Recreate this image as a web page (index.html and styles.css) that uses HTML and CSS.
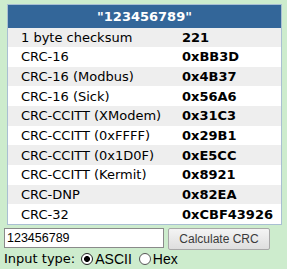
FILE: index.html
```html
<!DOCTYPE html>
<html>
<head>
<meta charset="utf-8">
<link rel="stylesheet" href="styles.css">
</head>
<body>
<div class="page">
  <div class="crc">
    <div class="head">"123456789"</div>
    <div class="row"><span class="lbl">1 byte checksum</span><span class="val">221</span></div>
    <div class="row"><span class="lbl">CRC-16</span><span class="val">0xBB3D</span></div>
    <div class="row"><span class="lbl">CRC-16 (Modbus)</span><span class="val">0x4B37</span></div>
    <div class="row"><span class="lbl">CRC-16 (Sick)</span><span class="val">0x56A6</span></div>
    <div class="row"><span class="lbl">CRC-CCITT (XModem)</span><span class="val">0x31C3</span></div>
    <div class="row"><span class="lbl">CRC-CCITT (0xFFFF)</span><span class="val">0x29B1</span></div>
    <div class="row"><span class="lbl">CRC-CCITT (0x1D0F)</span><span class="val">0xE5CC</span></div>
    <div class="row"><span class="lbl">CRC-CCITT (Kermit)</span><span class="val">0x8921</span></div>
    <div class="row"><span class="lbl">CRC-DNP</span><span class="val">0x82EA</span></div>
    <div class="row"><span class="lbl">CRC-32</span><span class="val">0xCBF43926</span></div>
  </div>
  <div class="form-row">
    <input class="text-in" type="text" value="123456789">
    <button class="calc" type="button">Calculate CRC</button>
  </div>
  <div class="type-row">
    <span class="type-lbl">Input type:</span>
    <label class="opt"><input type="radio" name="t" checked>ASCII</label>
    <label class="opt opt2"><input type="radio" name="t">Hex</label>
  </div>
</div>
</body>
</html>
```

FILE: styles.css
```css
html, body {
  margin: 0;
  padding: 0;
  background: #cdeccd;
}
body {
  font-family: "DejaVu Sans", Verdana, sans-serif;
  font-size: 13px;
  color: #000;
}
.page {
  padding: 4px 4px 0 4px;
}
.crc {
  width: 275px;
  box-sizing: border-box;
  margin-left: 3px;
  border: 1px solid #a9bfd2;
  background: #fff;
}
.head {
  background: #336699;
  color: #fff;
  font-weight: bold;
  height: 22.5px;
  display: flex;
  align-items: center;
  justify-content: center;
}
.row {
  display: flex;
  align-items: center;
  height: 19.65px;
}
.row:nth-child(even) {
  background: #eeeeee;
}
.lbl {
  padding-left: 13px;
  width: 161px;
  flex: none;
}
.val {
  font-weight: bold;
}
.form-row {
  display: flex;
  align-items: flex-start;
  gap: 4px;
  margin-top: 3px;
}
.text-in {
  box-sizing: border-box;
  width: 160px;
  height: 20px;
  margin: 0;
  padding: 0 2px;
  border: 1px solid #8a8a8a;
  font-family: "Liberation Sans", Arial, sans-serif;
  font-size: 12.5px;
  background: #fff;
}
.calc {
  box-sizing: border-box;
  width: 102px;
  height: 22px;
  margin: 0;
  padding: 0;
  border: 1px solid #a8a8a8;
  border-radius: 2px;
  background: linear-gradient(#f4f4f4, #dedede);
  color: #3a3a3a;
  font-family: "Liberation Sans", Arial, sans-serif;
  font-size: 12px;
}
.type-row {
  display: flex;
  align-items: center;
  margin-top: 1px;
}
.type-lbl {
  margin-right: 3px;
}
.opt {
  display: flex;
  align-items: center;
  font-family: "Liberation Sans", Arial, sans-serif;
  font-size: 14px;
}
.opt2 {
  margin-left: 4px;
}
.opt input {
  appearance: none;
  -webkit-appearance: none;
  box-sizing: border-box;
  margin: 0 2px 0 3px;
  width: 12px;
  height: 12px;
  border: 1px solid #555;
  border-radius: 50%;
  background: #fff;
}
.opt input:checked {
  border-color: #222;
  background: radial-gradient(circle, #000 0, #000 2.6px, #fff 3.3px);
}
```
